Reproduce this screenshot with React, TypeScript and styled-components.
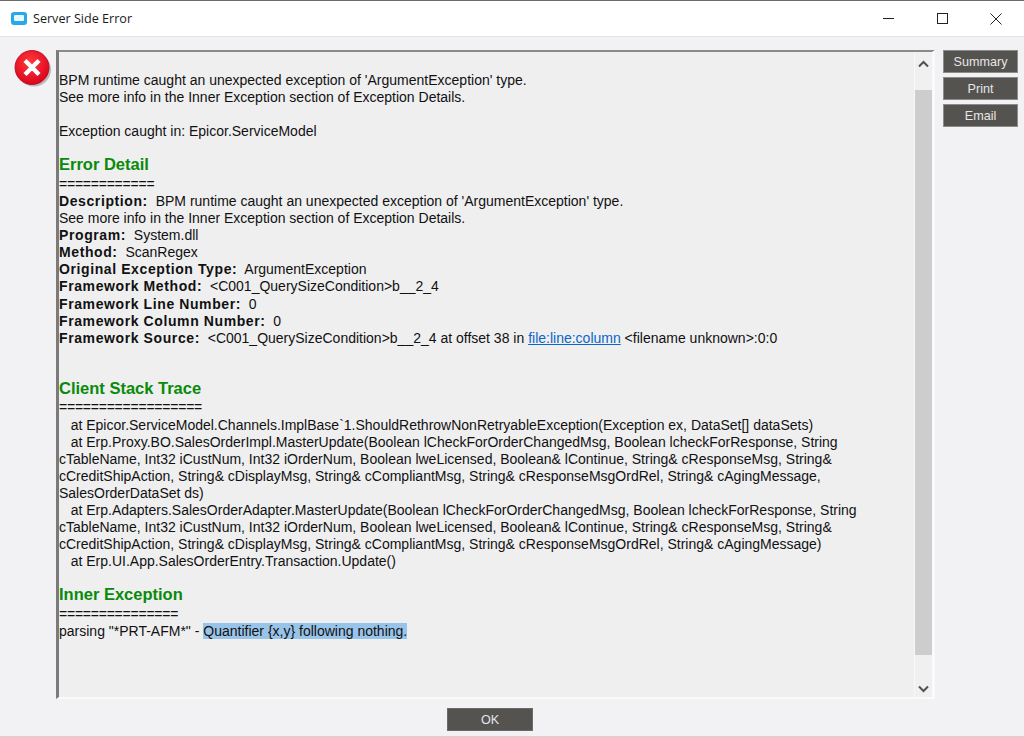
import styled, { createGlobalStyle } from 'styled-components';

const GlobalStyle = createGlobalStyle`
  html, body {
    margin: 0;
    padding: 0;
    background: #f2f2f4;
  }
`;

const Window = styled.div`
  box-sizing: border-box;
  width: 1024px;
  height: 737px;
  display: flex;
  flex-direction: column;
  overflow: hidden;
  background: #f2f2f4;
  border-top: 1px solid #6b6b6b;
  border-bottom: 1px solid #d2d2d2;
  font-family: 'Liberation Sans', Arial, sans-serif;
`;

const TitleBar = styled.header`
  flex: none;
  box-sizing: border-box;
  height: 36px;
  display: flex;
  align-items: center;
  padding: 0 1px 0 11px;
  background: #ffffff;
  border-bottom: 1px solid #e4e4e4;
`;

const AppIcon = styled.span`
  position: relative;
  box-sizing: border-box;
  width: 16px;
  height: 13px;
  margin-right: 6px;
  border-radius: 3px;
  background: #28a8e8;

  &::after {
    content: '';
    position: absolute;
    left: 3px;
    top: 3px;
    width: 10px;
    height: 6px;
    border-radius: 1px;
    background: #e8f6fd;
  }
`;

const WindowTitle = styled.span`
  font-family: 'Open Sans', 'Noto Sans', sans-serif;
  font-size: 12.6px;
  color: #1a1a1a;
`;

const WindowControls = styled.div`
  display: flex;
  margin-left: auto;
`;

const ControlButton = styled.span`
  width: 54px;
  height: 35px;
  display: flex;
  align-items: center;
  justify-content: center;
`;

const Content = styled.main`
  flex: 1;
  min-height: 0;
  display: flex;
  padding: 13px 6px 0 14px;
`;

const IconColumn = styled.div`
  flex: none;
  width: 42px;
`;

const LogPanel = styled.section`
  box-sizing: border-box;
  width: 880px;
  height: 649px;
  display: flex;
  background: #efeff0;
  border-style: solid;
  border-width: 2px 3px 2px 3px;
  border-color: #8a8a8a #fafafa #fafafa #7a7a7a;
`;

const LogText = styled.div`
  flex: 1;
  min-width: 0;
  padding: 20px 0 0 0;
  font-size: 14px;
  line-height: 17.1px;
  color: #111111;
`;

const Line = styled.div`
  min-height: 17.1px;
  white-space: pre;
`;

const Rule = styled(Line)`
  letter-spacing: -0.23px;
`;

const SectionHeading = styled.div`
  margin-top: 14px;
  font-size: 16.5px;
  font-weight: 700;
  line-height: 21.5px;
  color: #0a8a0a;
`;

const Field = styled.b`
  font-weight: 700;
  letter-spacing: 0.6px;
`;

const DocLink = styled.span`
  color: #0a66c8;
  text-decoration: underline;
`;

const Selected = styled.span`
  background: #99c4ea;
`;

const Scrollbar = styled.div`
  flex: none;
  width: 17px;
  display: flex;
  flex-direction: column;
  align-items: center;
  background: #f0f0f0;
  border-left: 1px solid #f8f8f8;
`;

const ScrollArrow = styled.span<{ $down?: boolean }>`
  flex: none;
  box-sizing: border-box;
  height: ${({ $down }) => ($down ? '42px' : '38px')};
  display: flex;
  align-items: ${({ $down }) => ($down ? 'flex-end' : 'flex-start')};
  padding: ${({ $down }) => ($down ? '0 0 4px' : '8px 0 0')};
`;

const ScrollThumb = styled.div`
  flex: 1;
  width: 100%;
  background: #cdcdcd;
`;

const ActionColumn = styled.aside`
  flex: none;
  margin-left: 8px;
  display: flex;
  flex-direction: column;
  gap: 4px;
`;

const DarkButton = styled.button`
  box-sizing: border-box;
  padding: 0;
  font-family: 'Liberation Sans', Arial, sans-serif;
  font-size: 12.6px;
  color: #e6e6e6;
  background: #555350;
  border: 1px solid #8c8c8c;
`;

const ActionButton = styled(DarkButton)`
  width: 75px;
  height: 23px;
`;

const Footer = styled.footer`
  flex: none;
  height: 37px;
  display: flex;
  justify-content: center;
  padding: 9px 44px 0 0;
  box-sizing: border-box;
`;

const OkButton = styled(DarkButton)`
  width: 86px;
  height: 23px;
  border-color: #6a6a6a;
`;

const ErrorIcon = () => (
  <svg width="38" height="38" viewBox="0 0 38 38">
    <defs>
      <radialGradient id="errorFill" cx="45%" cy="35%" r="70%">
        <stop offset="0%" stopColor="#ff3b3b" />
        <stop offset="100%" stopColor="#d9001c" />
      </radialGradient>
    </defs>
    <circle cx="20" cy="19.5" r="17" fill="#8a8a8a" opacity="0.55" />
    <circle cx="18" cy="17.5" r="17" fill="url(#errorFill)" stroke="#b8001a" strokeWidth="0.8" />
    <path d="M11 10.5 L25 24.5 M25 10.5 L11 24.5" stroke="#ffffff" strokeWidth="4.4" />
  </svg>
);

const Chevron = ({ down }: { down?: boolean }) => (
  <svg width="11" height="8" viewBox="0 0 11 8">
    <path
      d={down ? 'M1 1.5 L5.5 6 L10 1.5' : 'M1 6.5 L5.5 2 L10 6.5'}
      fill="none"
      stroke="#505050"
      strokeWidth="2"
    />
  </svg>
);

const App = () => (
  <Window>
    <GlobalStyle />
    <TitleBar>
      <AppIcon />
      <WindowTitle>Server Side Error</WindowTitle>
      <WindowControls>
        <ControlButton>
          <svg width="11" height="11" viewBox="0 0 11 11">
            <path d="M0 5.5 H11" stroke="#222" strokeWidth="1" />
          </svg>
        </ControlButton>
        <ControlButton>
          <svg width="11" height="11" viewBox="0 0 11 11">
            <rect x="0.5" y="0.5" width="10" height="10" fill="none" stroke="#222" />
          </svg>
        </ControlButton>
        <ControlButton>
          <svg width="12" height="12" viewBox="0 0 12 12">
            <path d="M0.5 0.5 L11.5 11.5 M11.5 0.5 L0.5 11.5" stroke="#222" strokeWidth="1" />
          </svg>
        </ControlButton>
      </WindowControls>
    </TitleBar>
    <Content>
      <IconColumn>
        <ErrorIcon />
      </IconColumn>
      <LogPanel>
        <LogText>
          <Line>BPM runtime caught an unexpected exception of 'ArgumentException' type.</Line>
          <Line>See more info in the Inner Exception section of Exception Details.</Line>
          <Line />
          <Line>Exception caught in: Epicor.ServiceModel</Line>
          <SectionHeading>Error Detail</SectionHeading>
          <Rule>============</Rule>
          <Line><Field>Description:</Field>  BPM runtime caught an unexpected exception of 'ArgumentException' type.</Line>
          <Line>See more info in the Inner Exception section of Exception Details.</Line>
          <Line><Field>Program:</Field>  System.dll</Line>
          <Line><Field>Method:</Field>  ScanRegex</Line>
          <Line><Field>Original Exception Type:</Field>  ArgumentException</Line>
          <Line><Field>Framework Method:</Field>  &lt;C001_QuerySizeCondition&gt;b__2_4</Line>
          <Line><Field>Framework Line Number:</Field>  0</Line>
          <Line><Field>Framework Column Number:</Field>  0</Line>
          <Line><Field>Framework Source:</Field>  &lt;C001_QuerySizeCondition&gt;b__2_4 at offset 38 in <DocLink>file:line:column</DocLink> &lt;filename unknown&gt;:0:0</Line>
          <Line />
          <SectionHeading>Client Stack Trace</SectionHeading>
          <Rule>==================</Rule>
          <Line>   at Epicor.ServiceModel.Channels.ImplBase`1.ShouldRethrowNonRetryableException(Exception ex, DataSet[] dataSets)</Line>
          <Line>   at Erp.Proxy.BO.SalesOrderImpl.MasterUpdate(Boolean lCheckForOrderChangedMsg, Boolean lcheckForResponse, String</Line>
          <Line>cTableName, Int32 iCustNum, Int32 iOrderNum, Boolean lweLicensed, Boolean&amp; lContinue, String&amp; cResponseMsg, String&amp;</Line>
          <Line>cCreditShipAction, String&amp; cDisplayMsg, String&amp; cCompliantMsg, String&amp; cResponseMsgOrdRel, String&amp; cAgingMessage,</Line>
          <Line>SalesOrderDataSet ds)</Line>
          <Line>   at Erp.Adapters.SalesOrderAdapter.MasterUpdate(Boolean lCheckForOrderChangedMsg, Boolean lcheckForResponse, String</Line>
          <Line>cTableName, Int32 iCustNum, Int32 iOrderNum, Boolean lweLicensed, Boolean&amp; lContinue, String&amp; cResponseMsg, String&amp;</Line>
          <Line>cCreditShipAction, String&amp; cDisplayMsg, String&amp; cCompliantMsg, String&amp; cResponseMsgOrdRel, String&amp; cAgingMessage)</Line>
          <Line>   at Erp.UI.App.SalesOrderEntry.Transaction.Update()</Line>
          <SectionHeading>Inner Exception</SectionHeading>
          <Rule>===============</Rule>
          <Line>parsing "*PRT-AFM*" - <Selected>Quantifier {'{x,y}'} following nothing.</Selected></Line>
        </LogText>
        <Scrollbar>
          <ScrollArrow><Chevron /></ScrollArrow>
          <ScrollThumb />
          <ScrollArrow $down><Chevron down /></ScrollArrow>
        </Scrollbar>
      </LogPanel>
      <ActionColumn>
        <ActionButton>Summary</ActionButton>
        <ActionButton>Print</ActionButton>
        <ActionButton>Email</ActionButton>
      </ActionColumn>
    </Content>
    <Footer>
      <OkButton>OK</OkButton>
    </Footer>
  </Window>
);

export default App;
